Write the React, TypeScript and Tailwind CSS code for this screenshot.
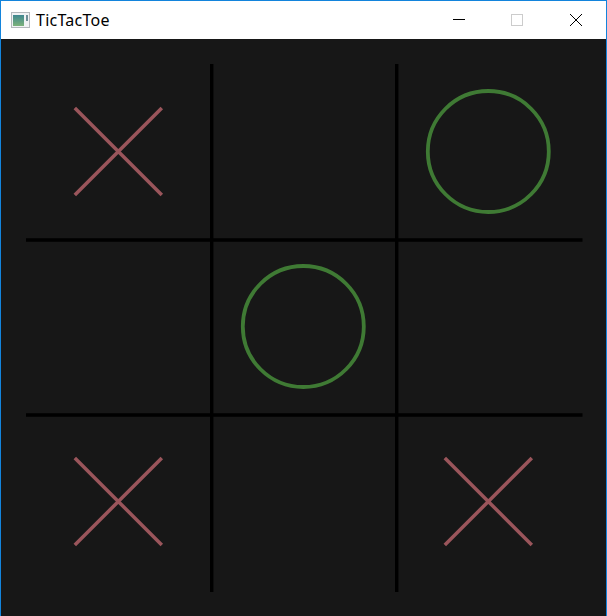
const lines = [
  { x1: 211.7, y1: 64, x2: 211.7, y2: 592 },
  { x1: 396.7, y1: 64, x2: 396.7, y2: 592 },
  { x1: 26, y1: 240, x2: 582.5, y2: 240 },
  { x1: 26, y1: 415, x2: 582.5, y2: 415 },
];

const crosses = [
  { x: 118.3, y: 151.5 },
  { x: 118.3, y: 501.5 },
  { x: 488.3, y: 501.5 },
];

const circles = [
  { x: 488.3, y: 151.5 },
  { x: 303.3, y: 326.5 },
];

const App = () => {
  return (
    <div className="w-[607px] h-[616px] flex flex-col bg-white border-x border-t border-[#1384dc] overflow-hidden">
      {/* Title bar */}
      <div className="h-[38px] shrink-0 flex items-center bg-white">
        <svg width="19" height="16" viewBox="0 0 19 16" className="ml-[10px] mt-[-1px]">
          <defs>
            <linearGradient id="pane" x1="0" y1="0" x2="0" y2="1">
              <stop offset="0" stopColor="#3f8790" />
              <stop offset="1" stopColor="#7cb27a" />
            </linearGradient>
          </defs>
          <rect x="0.5" y="0.5" width="18" height="15" fill="#f0f2f4" stroke="#b4b8bc" />
          <rect x="2" y="3" width="11" height="11" fill="url(#pane)" />
          <rect x="15" y="3" width="2" height="6" fill="#6f8f98" />
        </svg>
        <span className="ml-[6px] text-[16px] tracking-[0.25px] text-black font-['Noto_Sans',sans-serif]">TicTacToe</span>
        <div className="ml-auto flex items-center mr-[24px]">
          <svg width="12" height="12" viewBox="0 0 12 12">
            <path d="M0 5.5H12" stroke="#000" strokeWidth="1" />
          </svg>
          <svg width="12" height="12" viewBox="0 0 12 12" className="ml-[46px]">
            <rect x="0.5" y="0.5" width="11" height="11" fill="none" stroke="#cccccc" />
          </svg>
          <svg width="12" height="12" viewBox="0 0 12 12" className="ml-[47px]">
            <path d="M0 0L12 12M12 0L0 12" stroke="#000" strokeWidth="1" />
          </svg>
        </div>
      </div>

      {/* Game board */}
      <svg width="605" height="577" viewBox="1 39 605 577" className="block shrink-0 bg-[#171717]">
        {lines.map((l, i) => (
          <line key={i} {...l} stroke="#000" strokeWidth="3.4" />
        ))}
        {crosses.map((c, i) => (
          <path
            key={i}
            d={`M${c.x - 43.5} ${c.y - 43.5}L${c.x + 43.5} ${c.y + 43.5}M${c.x + 43.5} ${c.y - 43.5}L${c.x - 43.5} ${c.y + 43.5}`}
            stroke="#9a555b"
            strokeWidth="3.5"
            fill="none"
          />
        ))}
        {circles.map((c, i) => (
          <circle key={i} cx={c.x} cy={c.y} r="60.5" stroke="#3f7a34" strokeWidth="3.8" fill="none" />
        ))}
      </svg>
    </div>
  );
};

export default App;
